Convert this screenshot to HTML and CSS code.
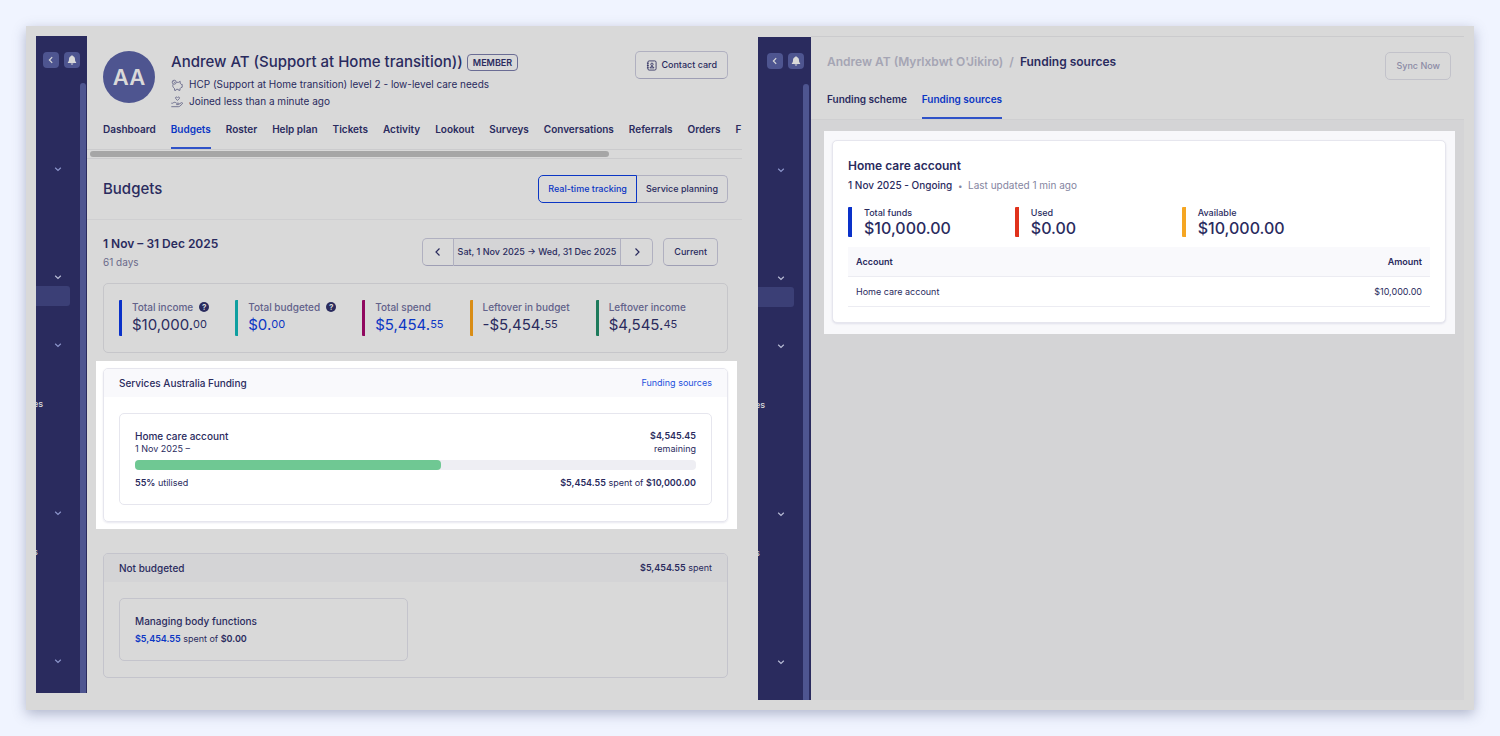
FILE: index.html
```html
<!DOCTYPE html>
<html lang="en">
<head>
    <meta charset="UTF-8">
    <meta name="viewport" content="width=device-width, initial-scale=1.0">
    <title>Budgets and funding sources</title>
    <link rel="stylesheet" href="styles.css">
</head>
<body>

<!-- shared icons -->
<svg class="sprite" aria-hidden="true">
    <symbol id="chev-left" viewBox="0 0 10 10"><path d="M6.500 1.500 3 5l3.500 3.500"/></symbol>
    <symbol id="chev-right" viewBox="0 0 10 10"><path d="M3.500 1.500 7 5 3.500 8.500"/></symbol>
    <symbol id="chev-down" viewBox="0 0 10 10"><path d="M2.200 3.800 5 6.400l2.800-2.600"/></symbol>
    <symbol id="bell" viewBox="0 0 10 10"><path d="M5 .3c.5 0 .8.300.8.800C7.300 1.500 8 2.700 8 4.200c0 1.600.4 2.300 1.100 3 .3.400.1.900-.4.900H1.300c-.5 0-.7-.5-.4-.9.700-.7 1.100-1.400 1.100-3 0-1.500.7-2.700 2.200-3.100 0-.5.300-.8.800-.8zM3.700 8.600h2.600c0 .7-.6 1.200-1.300 1.200s-1.300-.5-1.300-1.200z"/></symbol>
</svg>

<div class="sheet">

    <!-- left: budgets -->
    <div class="panel">
        <aside class="sidebar">
            <div class="side-buttons">
                <button aria-label="Back"><svg class="line small"><use href="#chev-left"/></svg></button>
                <button aria-label="Notifications"><svg class="solid"><use href="#bell"/></svg></button>
            </div>
            <div class="side-scroll">
                <ul class="side-menu">
                    <li class="group"><svg class="line"><use href="#chev-down"/></svg></li>
                    <li></li><li></li><li></li><li></li>
                    <li class="group light"><svg class="line"><use href="#chev-down"/></svg></li>
                    <li class="active"></li><li></li>
                    <li class="group"><svg class="line"><use href="#chev-down"/></svg></li>
                    <li></li><li></li><li><span>es</span></li><li></li><li></li><li></li><li></li>
                    <li class="group"><svg class="line"><use href="#chev-down"/></svg></li>
                    <li></li><li><span>s</span></li><li></li><li></li><li></li><li></li>
                    <li class="group"><svg class="line"><use href="#chev-down"/></svg></li>
                </ul>
                <div class="side-thumb"></div>
            </div>
        </aside>

        <main class="main">
            <header class="member">
                <div class="avatar">AA</div>
                <div class="member-info">
                    <div class="member-name">
                        <h1>Andrew AT (Support at Home transition))</h1>
                        <span class="badge">MEMBER</span>
                    </div>
                    <p>
                        <svg viewBox="0 0 12 12"><circle cx="3.200" cy="3.200" r="2"/><path d="M5.500 3.300h2.200l1.500-1v1.900l1 1.200h1v2.800l-1.400.5-.8 1v1.600H7.600l-.4-1H5.400l-.4 1H3.500V9.500C2 8.600 1.400 7 2 5.300M2.700 2.500l1 1.400"/></svg>
                        HCP (Support at Home transition) level 2 - low-level care needs
                    </p>
                    <p>
                        <svg viewBox="0 0 12 12"><path d="M6.500 4.400 4.700 2.600c-.7-.8.300-2.100 1.300-1.400l.5.5.5-.5c1-.7 2 .6 1.300 1.400zM.3 7.200h1.500c1.300-1.400 2.700-1 3.600 0h2c.9 0 .9 1.400 0 1.400H5.200M8.200 8l2.200-1.300c.9-.4 1.600.5.900 1.200L8.800 10.200c-.5.400-.9.500-1.500.5H.3"/></svg>
                        Joined less than a minute ago
                    </p>
                </div>
                <button class="btn contact">
                    <svg viewBox="0 0 12 12"><rect x="2" y="1" width="9" height="10" rx="1.500"/><circle cx="6.500" cy="4.700" r="1.300"/><path d="M4.300 8.600c.3-2 4.100-2 4.400 0zM1 3.500h2M1 6h2M1 8.500h2"/></svg>
                    Contact card
                </button>
            </header>

            <nav class="tabs">
                <a href="#">Dashboard</a>
                <a href="#" class="current">Budgets</a>
                <a href="#">Roster</a>
                <a href="#">Help plan</a>
                <a href="#">Tickets</a>
                <a href="#">Activity</a>
                <a href="#">Lookout</a>
                <a href="#">Surveys</a>
                <a href="#">Conversations</a>
                <a href="#">Referrals</a>
                <a href="#">Orders</a>
                <a href="#">F</a>
            </nav>
            <div class="tab-scroll"><div></div></div>

            <div class="title-bar">
                <h2>Budgets</h2>
                <div class="segmented">
                    <button class="selected">Real-time tracking</button>
                    <button>Service planning</button>
                </div>
            </div>

            <div class="content">
                <div class="period">
                    <div>
                        <h3>1 Nov – 31 Dec 2025</h3>
                        <p>61 days</p>
                    </div>
                    <div class="period-nav">
                        <div class="segmented dates">
                            <button aria-label="Previous"><svg class="line"><use href="#chev-left"/></svg></button>
                            <button class="range">Sat, 1 Nov 2025 → Wed, 31 Dec 2025</button>
                            <button aria-label="Next"><svg class="line"><use href="#chev-right"/></svg></button>
                        </div>
                        <button class="btn">Current</button>
                    </div>
                </div>

                <div class="summary">
                    <div class="stat blue">
                        <div class="label">Total income <span class="help">?</span></div>
                        <div class="value">$10,000.<small>00</small></div>
                    </div>
                    <div class="stat teal">
                        <div class="label">Total budgeted <span class="help">?</span></div>
                        <div class="value link">$0.<small>00</small></div>
                    </div>
                    <div class="stat pink">
                        <div class="label">Total spend</div>
                        <div class="value link">$5,454.<small>55</small></div>
                    </div>
                    <div class="stat orange">
                        <div class="label">Leftover in budget</div>
                        <div class="value">-$5,454.<small>55</small></div>
                    </div>
                    <div class="stat green">
                        <div class="label">Leftover income</div>
                        <div class="value">$4,545.<small>45</small></div>
                    </div>
                </div>

                <div class="spotlight">
                    <section class="card">
                        <div class="card-head">
                            <h4>Services Australia Funding</h4>
                            <a href="#">Funding sources</a>
                        </div>
                        <div class="card-body">
                            <div class="box">
                                <div class="row">
                                    <h4>Home care account</h4>
                                    <strong>$4,545.45</strong>
                                </div>
                                <div class="row sub">
                                    <span>1 Nov 2025 –</span>
                                    <span>remaining</span>
                                </div>
                                <div class="bar"><div style="width: 54.5%"></div></div>
                                <div class="row">
                                    <span><strong>55%</strong> utilised</span>
                                    <span><strong>$5,454.55</strong> spent of <strong>$10,000.00</strong></span>
                                </div>
                            </div>
                        </div>
                    </section>
                </div>

                <section class="card">
                    <div class="card-head">
                        <h4>Not budgeted</h4>
                        <span><strong>$5,454.55</strong> spent</span>
                    </div>
                    <div class="card-body cols">
                        <div class="box">
                            <h4>Managing body functions</h4>
                            <div class="row spent">
                                <span><strong class="link">$5,454.55</strong> spent of <strong>$0.00</strong></span>
                            </div>
                        </div>
                    </div>
                </section>
            </div>
        </main>
    </div>

    <!-- right: funding sources -->
    <div class="panel funding">
        <aside class="sidebar">
            <div class="side-buttons">
                <button aria-label="Back"><svg class="line small"><use href="#chev-left"/></svg></button>
                <button aria-label="Notifications"><svg class="solid"><use href="#bell"/></svg></button>
            </div>
            <div class="side-scroll">
                <ul class="side-menu">
                    <li class="group"><svg class="line"><use href="#chev-down"/></svg></li>
                    <li></li><li></li><li></li><li></li>
                    <li class="group light"><svg class="line"><use href="#chev-down"/></svg></li>
                    <li class="active"></li><li></li>
                    <li class="group light"><svg class="line"><use href="#chev-down"/></svg></li>
                    <li></li><li></li><li><span>es</span></li><li></li><li></li><li></li><li></li>
                    <li class="group light"><svg class="line"><use href="#chev-down"/></svg></li>
                    <li></li><li><span>s</span></li><li></li><li></li><li></li><li></li>
                    <li class="group light"><svg class="line"><use href="#chev-down"/></svg></li>
                </ul>
                <div class="side-thumb"></div>
            </div>
        </aside>

        <main class="main">
            <div class="funding-head">
                <div class="crumbs">
                    <div class="crumb-text">
                        <a href="#">Andrew AT (Myrlxbwt O'Jikiro)</a>
                        <span>/</span>
                        <h1>Funding sources</h1>
                    </div>
                    <button class="btn" disabled>Sync Now</button>
                </div>
                <nav class="tabs">
                    <a href="#">Funding scheme</a>
                    <a href="#" class="current">Funding sources</a>
                </nav>
            </div>

            <div class="spotlight">
                <section class="card account">
                    <h3>Home care account</h3>
                    <p class="updated">1 Nov 2025 - Ongoing <i>•</i> <span>Last updated 1 min ago</span></p>
                    <div class="funds">
                        <div class="fund blue"><div>Total funds</div><b>$10,000.00</b></div>
                        <div class="fund red"><div>Used</div><b>$0.00</b></div>
                        <div class="fund amber"><div>Available</div><b>$10,000.00</b></div>
                    </div>
                    <table>
                        <thead>
                            <tr><th>Account</th><th>Amount</th></tr>
                        </thead>
                        <tbody>
                            <tr><td>Home care account</td><td>$10,000.00</td></tr>
                        </tbody>
                    </table>
                </section>
            </div>
        </main>
    </div>

</div>

</body>
</html>
```
FILE: styles.css
```css
* {
    box-sizing: border-box;
}
body {
    margin: 0;
    padding: 26px;
    min-height: 100vh;
    display: flex;
    background: #f0f4ff;
    color: #2a2b5e;
    font-family: Inter, "Liberation Sans", sans-serif;
    font-size: 9px;
    line-height: 14px;
}
h1, h2, h3, h4, p, ul {
    margin: 0;
    padding: 0;
    font-weight: 500;
}
button {
    font: inherit;
    font-weight: 500;
    color: inherit;
    background: none;
    padding: 0;
    cursor: pointer;
}
a {
    color: inherit;
    text-decoration: none;
}
strong {
    font-weight: 600;
}
svg {
    width: 10px;
    height: 10px;
    fill: none;
    stroke: currentColor;
    flex: none;
}
.sprite {
    display: none;
}
.solid {
    fill: currentColor;
    stroke: none;
}
.line {
    stroke-width: 1.2;
}
.small {
    width: 8px;
    height: 8px;
    stroke-width: 1.5;
}

.sheet {
    flex: 1;
    display: flex;
    gap: 16px;
    padding: 10px;
    background: #d9d9d9;
    box-shadow: 0 4px 12px rgba(60, 70, 110, 0.35);
}
.panel {
    flex: 1 1 0;
    min-width: 0;
    display: flex;
    align-self: flex-start;
}
.main {
    flex: 1;
    min-width: 0;
}

/* sidebar */
.sidebar {
    width: 51px;
    flex: none;
    display: flex;
    flex-direction: column;
    overflow: hidden;
    background: #2a2b5e;
    color: #d9d9d9;
}
.side-buttons {
    display: flex;
    justify-content: flex-end;
    gap: 5px;
    padding: 16px 7px 15px 0;
}
.side-buttons button {
    width: 16px;
    height: 16px;
    display: flex;
    align-items: center;
    justify-content: center;
    border: 0;
    border-radius: 4px;
    background: #4e5590;
}
.side-scroll {
    flex: 1;
    display: flex;
    justify-content: space-between;
    padding-right: 1px;
}
.side-menu {
    width: 34px;
    padding-top: 77px;
    list-style: none;
    font-size: 9px;
    font-weight: 500;
    line-height: 20px;
}
.side-menu li {
    height: 20px;
}
.side-menu span {
    display: block;
    margin-left: -3px;
}
.side-menu .group {
    height: 18px;
    padding: 4px 0 0 17px;
    line-height: 10px;
    color: #8c96cc;
}
.side-menu .light {
    color: #b9bdd6;
}
.side-menu li + .group {
    margin-top: 10px;
}
.side-menu .active {
    border-radius: 0 3px 3px 0;
    background: #3b3f76;
}
.side-thumb {
    width: 6px;
    border-radius: 3px 3px 0 0;
    background: #4e5590;
}

/* member header */
.member {
    display: flex;
    gap: 16px;
    padding: 15px 14px 0 16px;
}
.avatar {
    width: 52px;
    height: 52px;
    border-radius: 50%;
    background: #4e5590;
    color: #d9d9d9;
    font-size: 22px;
    font-weight: 600;
    line-height: 52px;
    text-align: center;
}
.member-info {
    flex: 1;
}
.member-name {
    display: flex;
    align-items: center;
    gap: 4px;
    height: 22px;
    margin-bottom: 3px;
}
.member-name h1 {
    font-size: 15px;
}
.badge {
    padding: 0 5px;
    border: 1px solid #6a6c94;
    border-radius: 4px;
    font-size: 9px;
    font-weight: 600;
    line-height: 15px;
}
.member-info p {
    display: flex;
    align-items: center;
    gap: 6px;
    font-size: 10px;
    font-weight: 400;
    line-height: 17px;
}
.member-info svg {
    width: 12px;
    height: 12px;
    stroke-width: 0.8;
    opacity: 0.7;
}
.btn {
    height: 28px;
    padding: 0 10px;
    border: 1px solid #b0b0c0;
    border-bottom-color: #9e9eb4;
    border-radius: 5px;
}
.btn:disabled {
    color: #8c8ba6;
    border-color: #c2c2ca;
}
.contact {
    display: flex;
    align-items: center;
    gap: 4px;
}
.contact svg {
    width: 11px;
    height: 11px;
    stroke-width: 0.9;
}

/* tabs */
.tabs {
    display: flex;
    gap: 15px;
    padding: 12px 0 0 16px;
    overflow: hidden;
    white-space: nowrap;
    font-size: 10px;
    font-weight: 600;
}
.tabs a {
    padding-bottom: 11px;
    border-bottom: 2px solid transparent;
}
.tabs .current {
    color: #0b36c4;
    border-color: #2f52c8;
}
.tab-scroll {
    padding: 1px 3px;
    border: 1px solid #cbcbcd;
    border-width: 1px 0;
}
.tab-scroll div {
    width: 80%;
    height: 6px;
    border-radius: 3px;
    background: #a6a6a6;
}

/* budgets */
.title-bar {
    display: flex;
    align-items: center;
    justify-content: space-between;
    padding: 16px 14px 16px 16px;
    border-bottom: 1px solid #cfcfd1;
}
.title-bar h2 {
    font-size: 15px;
}
.segmented {
    display: flex;
}
.segmented button {
    height: 28px;
    padding: 0 9px;
    border: 1px solid #b0b0c0;
    border-bottom-color: #9e9eb4;
    border-left: 0;
}
.segmented button:first-child {
    border-left: 1px solid #b0b0c0;
    border-radius: 5px 0 0 5px;
}
.segmented button:last-child {
    border-radius: 0 5px 5px 0;
}
.segmented .selected,
.segmented .selected:first-child {
    color: #0b36c4;
    border-color: #0b36c4;
}
.dates svg {
    display: block;
    margin: 0 auto;
}
.dates button {
    width: 32px;
    padding: 0;
}
.dates .range {
    width: auto;
    padding: 0 4px;
    background: #d4d4d6;
}
.content {
    padding: 14px 14px 15px 16px;
}
.period {
    display: flex;
    align-items: center;
    justify-content: space-between;
}
.period h3 {
    font-size: 12px;
    font-weight: 600;
    line-height: 20px;
}
.period p {
    color: #6a6a8a;
    font-size: 10px;
    font-weight: 400;
    line-height: 16px;
}
.period-nav {
    display: flex;
    gap: 10px;
    padding-right: 10px;
}
.summary {
    display: flex;
    gap: 26px;
    margin-top: 13px;
    padding: 16px 15px;
    border: 1px solid #c6c6ca;
    border-radius: 5px;
    white-space: nowrap;
}
.stat {
    padding-left: 10px;
    border-left: 3px solid;
    border-radius: 1px;
}
.label {
    display: flex;
    align-items: center;
    gap: 6px;
    color: #62628a;
    font-size: 10px;
    font-weight: 500;
}
.help {
    width: 10px;
    height: 10px;
    border-radius: 50%;
    background: #2a2b5e;
    color: #d9d9d9;
    font-size: 8px;
    font-weight: 700;
    line-height: 10px;
    text-align: center;
}
.value {
    color: #2a2b5e;
    font-size: 15px;
    line-height: 22px;
}
.value small {
    font-size: 11px;
    line-height: 1;
    vertical-align: 2px;
}
.link,
.card-head a {
    color: #0b36c4;
}

/* cards */
.card {
    border: 1px solid #c4c4cc;
    border-radius: 5px;
}
.card-head {
    display: flex;
    align-items: center;
    justify-content: space-between;
    height: 28px;
    padding: 0 15px;
    border-radius: 4px 4px 0 0;
    background: #d4d4d6;
}
.card h4 {
    font-size: 10px;
    line-height: 14px;
}
.card-body {
    padding: 16px 15px;
}
.cols {
    display: grid;
    grid-template-columns: 1fr 1fr;
    gap: 16px;
}
.box {
    padding: 15px 15px 14px;
    border: 1px solid #c4c4cc;
    border-radius: 5px;
}
.row {
    display: flex;
    justify-content: space-between;
}
.sub {
    line-height: 12px;
}
.spent {
    margin-top: 4px;
}
.bar {
    height: 10px;
    margin: 5px 0 6px;
    border-radius: 4px;
    background: #eeeef3;
}
.bar div {
    height: 100%;
    border-radius: 4px;
    background: #6fc893;
}
.spotlight {
    margin: 8px -9px 24px -7px;
    padding: 7px 9px 7px 7px;
    background: #fff;
}
.spotlight .card {
    border-color: #e6e6ee;
    box-shadow: 0 1px 2px rgba(60, 60, 120, 0.12);
}
.spotlight .box {
    border-color: #e6e6ee;
}
.spotlight .card-head {
    background: #f9f9fc;
}
.spotlight .card-head a {
    color: #2452dc;
}

/* funding sources */
.funding {
    align-self: stretch;
}
.funding .sidebar {
    width: 53px;
    margin-top: 1px;
}
.funding .side-scroll {
    padding-right: 2px;
}
.funding .side-menu {
    width: 36px;
}
.funding .side-menu .group {
    padding-left: 18px;
}
.funding .main {
    border-top: 1px solid #cbcbcd;
    background: #d4d4d6;
}
.funding-head {
    background: #d9d9d9;
    box-shadow: 0 1px 0 #cfcfd1;
}
.crumbs {
    display: flex;
    justify-content: space-between;
    padding: 15px 13px 0 16px;
}
.crumb-text {
    display: flex;
    gap: 6px;
    color: #a5a5b4;
    font-size: 12px;
    font-weight: 600;
    line-height: 20px;
}
.crumb-text h1 {
    color: #2a2b5e;
    font-size: 12px;
    font-weight: 600;
}
.funding .spotlight {
    margin: 12px 9px 0 13px;
    padding: 9px 9px 11px 8px;
    background: #f8f8fb;
}
.account {
    padding: 15px;
    background: #fff;
}
.account h3 {
    font-size: 12px;
    font-weight: 600;
    line-height: 20px;
}
.updated {
    margin: 1px 0 13px;
    font-size: 10px;
    line-height: 16px;
}
.updated span,
.updated i {
    color: #85859f;
    font-weight: 400;
}
.updated i {
    margin: 0 3px;
    font-size: 8px;
    font-style: normal;
}
.funds {
    display: grid;
    grid-template-columns: repeat(3, 1fr);
    width: 86%;
    margin-bottom: 10px;
}
.fund {
    padding-left: 12px;
    border-left: 4px solid;
    border-radius: 1px;
    font-weight: 500;
    line-height: 12px;
}
.fund b {
    display: block;
    font-size: 16px;
    font-weight: 500;
    line-height: 18px;
}
.account table {
    width: 100%;
    border-collapse: separate;
    border-spacing: 0;
}
.account th,
.account td {
    height: 30px;
    padding: 0 8px;
    border-bottom: 1px solid #ececf2;
    text-align: left;
}
.account th {
    background: #f9f9fc;
    font-weight: 600;
}
.account th:last-child,
.account td:last-child {
    text-align: right;
}

/* marker colours */
.blue { border-color: #0a31c9; }
.teal { border-color: #0f9fa0; }
.pink { border-color: #90085f; }
.orange { border-color: #d98d16; }
.green { border-color: #1d7a5b; }
.red { border-color: #e0321c; }
.amber { border-color: #f5a623; }
```
